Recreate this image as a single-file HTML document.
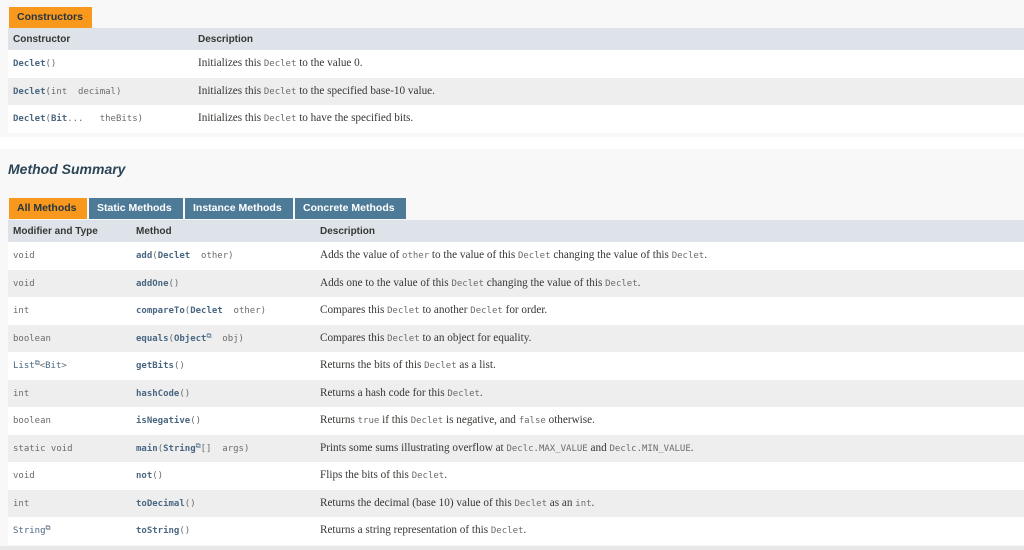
<!DOCTYPE html>
<html><head><meta charset="utf-8"><style>
*{margin:0;padding:0;box-sizing:border-box}
body{width:1024px;height:550px;background:#f8f8f8;position:relative;overflow:hidden;font-family:"Liberation Serif",serif;font-size:11.2px;color:#353833}
.a{position:absolute}
.tab{position:absolute;height:21px;line-height:21px;font-family:"Liberation Sans",sans-serif;font-weight:bold;font-size:10.5px;padding:0 8px;color:#fff;background:#4d7a97}
.tab.on{background:#f8981d;color:#253441}
.hdr{position:absolute;left:8px;width:1016px;height:22px;background:#dee3e9;font-family:"Liberation Sans",sans-serif;font-weight:bold;font-size:10px;color:#353833}
.hdr span,.row>span{position:absolute;top:0}
.row{position:absolute;left:8px;width:1016px;height:27.5px;line-height:27px;background:#fff}
.row.g{background:#eeeeef}
code{font-family:"DejaVu Sans Mono","Liberation Mono",monospace;font-size:9px;color:#6b6b6b}
.l{color:#4a6782;font-weight:bold}
.ln{color:#4a6782}
.x{font-size:7px;color:#4a6782;line-height:0;vertical-align:3px}
</style></head><body>
<div class="tab on" style="left:9px;top:7px;width:83px">Constructors</div>
<div class="hdr" style="top:28px;line-height:23px"><span style="left:5px">Constructor</span><span style="left:190px">Description</span></div>
<div class="row" style="top:50px"><span style="left:5px"><code><span class="l">Declet</span>()</code></span><span style="left:190px">Initializes this <code>Declet</code> to the value 0.</span></div>
<div class="row g" style="top:77.5px"><span style="left:5px"><code><span class="l">Declet</span>(int&nbsp;&nbsp;decimal)</code></span><span style="left:190px">Initializes this <code>Declet</code> to the specified base-10 value.</span></div>
<div class="row" style="top:105px"><span style="left:5px"><code><span class="l">Declet</span>(<span class="l">Bit</span>...&nbsp;&nbsp;&nbsp;theBits)</code></span><span style="left:190px">Initializes this <code>Declet</code> to have the specified bits.</span></div>
<div class="a" style="left:0;top:137px;width:1024px;height:12px;background:#fff"></div>
<div class="a" style="left:8px;top:161px;font-family:'Liberation Sans',sans-serif;font-style:italic;font-weight:bold;font-size:14px;color:#2c4557">Method Summary</div>
<div class="tab on" style="left:9px;top:198px;width:78px">All Methods</div>
<div class="tab" style="left:89px;top:198px;width:94px">Static Methods</div>
<div class="tab" style="left:185px;top:198px;width:108px">Instance Methods</div>
<div class="tab" style="left:295px;top:198px;width:111px">Concrete Methods</div>
<div class="hdr" style="top:220px;line-height:23px"><span style="left:5px">Modifier and Type</span><span style="left:128px">Method</span><span style="left:312px">Description</span></div>
<div class="row" style="top:242px"><span style="left:5px"><code>void</code></span><span style="left:128px"><code><span class="l">add</span>(<span class="l">Declet</span>&nbsp;&nbsp;other)</code></span><span style="left:312px">Adds the value of <code>other</code> to the value of this <code>Declet</code> changing the value of this <code>Declet</code>.</span></div>
<div class="row g" style="top:269.5px"><span style="left:5px"><code>void</code></span><span style="left:128px"><code><span class="l">addOne</span>()</code></span><span style="left:312px">Adds one to the value of this <code>Declet</code> changing the value of this <code>Declet</code>.</span></div>
<div class="row" style="top:297px"><span style="left:5px"><code>int</code></span><span style="left:128px"><code><span class="l">compareTo</span>(<span class="l">Declet</span>&nbsp;&nbsp;other)</code></span><span style="left:312px">Compares this <code>Declet</code> to another <code>Declet</code> for order.</span></div>
<div class="row g" style="top:324.5px"><span style="left:5px"><code>boolean</code></span><span style="left:128px"><code><span class="l">equals</span>(<span class="l">Object</span><span class="x">⧉</span>&nbsp;&nbsp;obj)</code></span><span style="left:312px">Compares this <code>Declet</code> to an object for equality.</span></div>
<div class="row" style="top:352px"><span style="left:5px"><code><span class="ln">List</span><span class="x">⧉</span>&lt;<span class="ln">Bit</span>&gt;</code></span><span style="left:128px"><code><span class="l">getBits</span>()</code></span><span style="left:312px">Returns the bits of this <code>Declet</code> as a list.</span></div>
<div class="row g" style="top:379.5px"><span style="left:5px"><code>int</code></span><span style="left:128px"><code><span class="l">hashCode</span>()</code></span><span style="left:312px">Returns a hash code for this <code>Declet</code>.</span></div>
<div class="row" style="top:407px"><span style="left:5px"><code>boolean</code></span><span style="left:128px"><code><span class="l">isNegative</span>()</code></span><span style="left:312px">Returns <code>true</code> if this <code>Declet</code> is negative, and <code>false</code> otherwise.</span></div>
<div class="row g" style="top:434.5px"><span style="left:5px"><code>static void</code></span><span style="left:128px"><code><span class="l">main</span>(<span class="l">String</span><span class="x">⧉</span>[]&nbsp;&nbsp;args)</code></span><span style="left:312px">Prints some sums illustrating overflow at <code>Declc.MAX_VALUE</code> and <code>Declc.MIN_VALUE</code>.</span></div>
<div class="row" style="top:462px"><span style="left:5px"><code>void</code></span><span style="left:128px"><code><span class="l">not</span>()</code></span><span style="left:312px">Flips the bits of this <code>Declet</code>.</span></div>
<div class="row g" style="top:489.5px"><span style="left:5px"><code>int</code></span><span style="left:128px"><code><span class="l">toDecimal</span>()</code></span><span style="left:312px">Returns the decimal (base 10) value of this <code>Declet</code> as an <code>int</code>.</span></div>
<div class="row" style="top:517px"><span style="left:5px"><code><span class="ln">String</span><span class="x">⧉</span></code></span><span style="left:128px"><code><span class="l">toString</span>()</code></span><span style="left:312px">Returns a string representation of this <code>Declet</code>.</span></div>
<div class="a" style="left:0;top:546px;width:1024px;height:4px;background:#e8e8e8"></div>
</body></html>
